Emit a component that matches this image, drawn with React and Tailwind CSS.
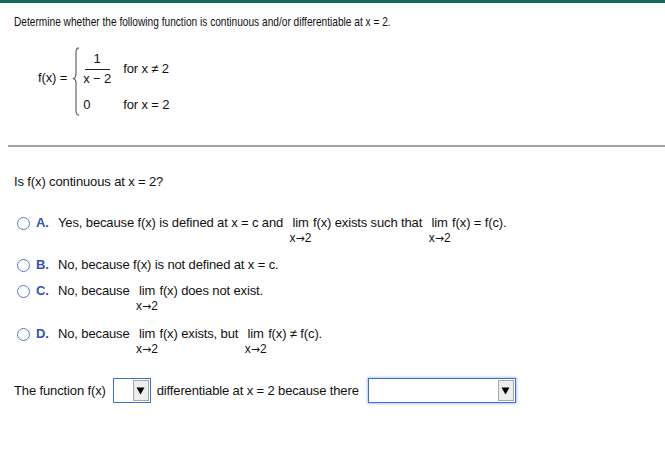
const Lim = () => (
  <span className="inline-flex flex-col items-center align-top ml-[3px] -mr-[2px]">
    <span>lim</span>
    <span className="flex items-center h-[16px] text-[12px] tracking-normal whitespace-nowrap">
      x<span className="font-['DejaVu_Sans',sans-serif] text-[11px] leading-none">→</span>2
    </span>
  </span>
)

const Option = ({ letter, className = '', children }) => (
  <div className={`flex items-start ${className}`}>
    <span className="mt-[1px] w-[13px] h-[13px] rounded-full border-[1.5px] border-[#5b7cc4] bg-white shrink-0" />
    <span className="ml-[6px] w-[22px] font-bold text-[#3455ad]">{letter}</span>
    <div className="whitespace-nowrap">{children}</div>
  </div>
)

const Arrow = () => (
  <svg width="9" height="9" viewBox="0 0 9 9">
    <path d="M0.5 1.5 H8.5 L4.5 8.5 Z" fill="#000" />
  </svg>
)

const Select = ({ width, focused }) => (
  <div
    className={`h-[25px] ${width} bg-white border flex items-center justify-end pr-[1px] ${
      focused ? 'border-[#3b6fd4] shadow-[0_0_2px_1px_rgba(90,140,230,0.45)]' : 'border-[#3b6fd4]'
    }`}
  >
    <div className="h-[21px] w-[16px] bg-[#ededed] border border-[#a9a9a9] flex items-center justify-center">
      <Arrow />
    </div>
  </div>
)

export default function App() {
  return (
    <div className="w-[665px] h-[466px] bg-white text-[#111] font-['Liberation_Sans',Arial,sans-serif] text-[13px] leading-[14px] tracking-[-0.01em]">
      <div className="h-[3px] bg-[#15695b]" />

      <div className="pl-[14px] mt-[12px]">
        <div className="origin-left scale-x-[0.78] whitespace-nowrap tracking-normal">
          Determine whether the following function is continuous and/or differentiable at x = 2.
        </div>
      </div>

      {/* function definition */}
      <div className="flex items-start mt-[18px] pl-[38px]">
        <span className="mt-[24px] whitespace-nowrap">f(x) =</span>
        <svg className="ml-[5px]" width="8" height="69" viewBox="0 0 8 69">
          <path
            d="M7 0.8 Q4 1.5 4 5 V27 Q4 30.5 1.5 31.5 Q4 32.5 4 36 V64 Q4 67.5 7 68.2"
            fill="none"
            stroke="#666"
            strokeWidth="1.2"
          />
        </svg>
        <div className="ml-[3px] pt-[5px]">
          <div className="flex items-center">
            <div className="w-[40px]">
              <div className="inline-flex flex-col items-center">
                <span>1</span>
                <span className="mt-[3px] mb-[2px] h-px w-[25px] bg-[#222]" />
                <span className="whitespace-nowrap">x − 2</span>
              </div>
            </div>
            <span className="whitespace-nowrap">for x ≠ 2</span>
          </div>
          <div className="flex items-center mt-[12px]">
            <div className="w-[40px]">0</div>
            <span className="whitespace-nowrap">for x = 2</span>
          </div>
        </div>
      </div>

      <div className="ml-[8px] mt-[29px] h-[2px] bg-[#9ea3a9]" />

      <div className="pl-[14px] mt-[28px]">Is f(x) continuous at x = 2?</div>

      <div className="pl-[17px] mt-[27px] flex flex-col gap-[12px]">
        <Option letter="A.">
          Yes, because f(x) is defined at x = c and <Lim /> f(x) exists such that <Lim /> f(x) = f(c).
        </Option>
        <Option letter="B.">No, because f(x) is not defined at x = c.</Option>
        <Option letter="C.">
          No, because <Lim /> f(x) does not exist.
        </Option>
        <Option letter="D." className="mt-[1px]">
          No, because <Lim /> f(x) exists, but <Lim /> f(x) ≠ f(c).
        </Option>
      </div>

      <div className="pl-[14px] mt-[21px] flex items-center">
        <span className="whitespace-nowrap">The function f(x)</span>
        <div className="ml-[7px]">
          <Select width="w-[38px]" />
        </div>
        <span className="ml-[6px] whitespace-nowrap">differentiable at x = 2 because there</span>
        <div className="ml-[9px]">
          <Select width="w-[148px]" focused />
        </div>
      </div>
    </div>
  )
}
